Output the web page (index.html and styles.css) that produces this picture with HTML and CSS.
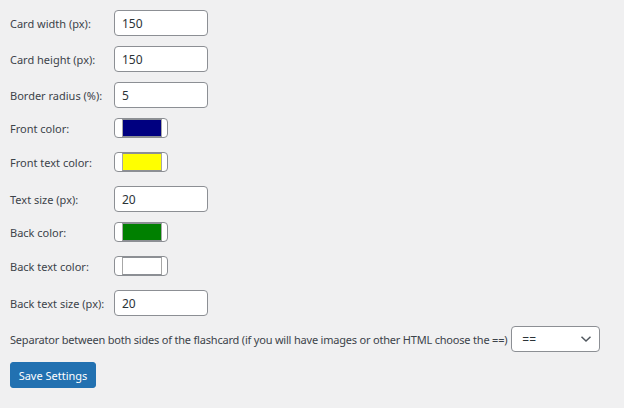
FILE: index.html
```html
<!DOCTYPE html>
<html>
<head>
<meta charset="utf-8">
<link rel="stylesheet" href="styles.css">
</head>
<body>
<form class="settings">
  <div class="row">
    <label class="lbl" for="cw">Card width (px):</label>
    <input class="txt" id="cw" type="text" value="150">
  </div>
  <div class="row">
    <label class="lbl" for="ch">Card height (px):</label>
    <input class="txt" id="ch" type="text" value="150">
  </div>
  <div class="row">
    <label class="lbl" for="br">Border radius (%):</label>
    <input class="txt" id="br" type="text" value="5">
  </div>
  <div class="row row-color">
    <label class="lbl">Front color:</label>
    <span class="swatch"><span class="chip chip-navy"></span></span>
  </div>
  <div class="row row-color">
    <label class="lbl">Front text color:</label>
    <span class="swatch"><span class="chip chip-yellow"></span></span>
  </div>
  <div class="row">
    <label class="lbl" for="ts">Text size (px):</label>
    <input class="txt" id="ts" type="text" value="20">
  </div>
  <div class="row row-color">
    <label class="lbl">Back color:</label>
    <span class="swatch"><span class="chip chip-green"></span></span>
  </div>
  <div class="row row-color">
    <label class="lbl">Back text color:</label>
    <span class="swatch"><span class="chip chip-white"></span></span>
  </div>
  <div class="row">
    <label class="lbl" for="bts">Back text size (px):</label>
    <input class="txt" id="bts" type="text" value="20">
  </div>
  <div class="row">
    <label class="lbl-inline" for="sep">Separator between both sides of the flashcard (if you will have images or other HTML choose the ==)</label>
    <span class="select-wrap">
      <select class="sel" id="sep"><option>==</option></select>
      <svg class="chev" width="12" height="8" viewBox="0 0 12 8"><path d="M1.5 1.8 L6 6 L10.5 1.8" fill="none" stroke="#50575e" stroke-width="1.5"/></svg>
    </span>
  </div>
  <div class="row">
    <button class="btn" type="button">Save Settings</button>
  </div>
</form>
</body>
</html>
```
FILE: styles.css
```css
html, body {
  margin: 0;
  padding: 0;
  background: #f0f0f1;
}
body {
  font-family: "Noto Sans", "Open Sans", sans-serif;
  font-size: 11px;
  color: #3c434a;
}
.settings {
  display: flex;
  flex-direction: column;
  gap: 10px;
  padding: 10px 10px 0 10px;
}
.row {
  display: flex;
  align-items: center;
  height: 26px;
}
.row-color {
  height: 20px;
  margin-bottom: 4px;
}
.lbl {
  width: 104px;
  flex: none;
}
.lbl-inline {
  flex: none;
  margin-right: 4px;
  letter-spacing: -0.2px;
}
.txt {
  box-sizing: border-box;
  width: 94px;
  height: 26px;
  border: 1px solid #8c8f94;
  border-radius: 4px;
  background: #fff;
  padding: 0 7px;
  font-family: inherit;
  font-size: 12px;
  color: #2c3338;
  outline: none;
}
.swatch {
  box-sizing: border-box;
  display: flex;
  width: 54px;
  height: 20px;
  border: 1px solid #8c8f94;
  border-radius: 4px;
  background: #fff;
  padding: 0 5px 0 7px;
}
.chip {
  box-sizing: border-box;
  flex: 1;
  height: 100%;
  border: 1px solid #a7a7a7;
  border-top-color: #8c8f94;
  border-bottom-color: #8c8f94;
}
.chip-navy { background: #000080; }
.chip-yellow { background: #ffff00; }
.chip-green { background: #008000; }
.chip-white { background: #ffffff; }
.select-wrap {
  position: relative;
  display: inline-flex;
}
.sel {
  box-sizing: border-box;
  width: 89px;
  height: 26px;
  appearance: none;
  -webkit-appearance: none;
  border: 1px solid #8c8f94;
  border-radius: 4px;
  background: #fff;
  padding: 0 24px 0 10px;
  font-family: inherit;
  font-size: 12px;
  color: #2c3338;
}
.chev {
  position: absolute;
  right: 8px;
  top: 9px;
  pointer-events: none;
}
.btn {
  box-sizing: border-box;
  width: 86px;
  height: 26px;
  border: 1px solid #2271b1;
  border-radius: 3px;
  background: #2271b1;
  color: #fff;
  font-family: inherit;
  font-size: 11px;
  padding: 0;
}
```
